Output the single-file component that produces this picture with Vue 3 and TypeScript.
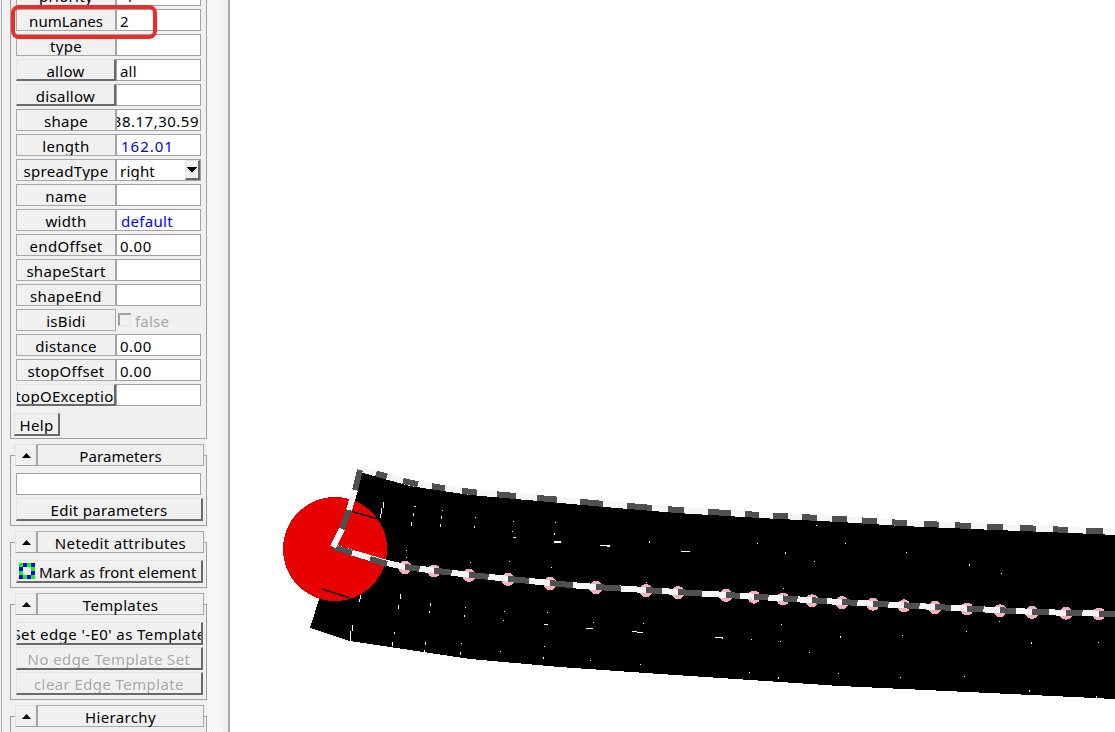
<script setup lang="ts">
type Row = { label: string; value?: string; kind?: string; raised?: boolean; tight?: boolean }

const rows: Row[] = [
  { label: 'priority', value: '-1', kind: 'num' },
  { label: 'numLanes', value: '2', tight: true },
  { label: 'type' },
  { label: 'allow', value: 'all', raised: true },
  { label: 'disallow', raised: true },
  { label: 'shape', value: '38.17,30.59', kind: 'clip num' },
  { label: 'length', value: '162.01', kind: 'blue digits' },
  { label: 'spreadType', value: 'right', kind: 'select' },
  { label: 'name' },
  { label: 'width', value: 'default', kind: 'blue' },
  { label: 'endOffset', value: '0.00', kind: 'num' },
  { label: 'shapeStart' },
  { label: 'shapeEnd' },
  { label: 'isBidi', value: 'false', kind: 'check' },
  { label: 'distance', value: '0.00', kind: 'num' },
  { label: 'stopOffset', value: '0.00', kind: 'num' },
  { label: 'stopOException', raised: true },
]

const topLine: number[][] = [[360, 469], [410, 483], [470, 492], [550, 499], [593, 503], [677, 510], [760, 515], [840, 519], [902, 523], [995, 527], [1095, 531], [1115, 532]]
const midLine: number[][] = [[333, 547], [387, 563], [405, 567], [470, 575], [570, 585], [596, 587], [677, 592], [760, 597], [840, 602], [935, 607], [1035, 612], [1115, 614]]
const botLine: number[][] = [[310, 628], [350, 641], [470, 659], [560, 667], [660, 674], [840, 686], [968, 692], [1115, 699]]

const toPts = (p: number[][]) => p.map((q) => q.join(',')).join(' ')
const roadPoints = toPts([...topLine, ...[...botLine].reverse()])
const midPoints = toPts(midLine)
const topPoints = toPts(topLine)

const yAt = (line: number[][], x: number): number => {
  for (let i = 1; i < line.length; i++) {
    const [x0, y0] = line[i - 1]
    const [x1, y1] = line[i]
    if (x <= x1) return y0 + ((y1 - y0) * (x - x0)) / (x1 - x0)
  }
  return line[line.length - 1][1]
}

const topDashes: number[][] = [[376, 387], [403, 418], [432, 445], [462, 477], [497, 516], [537, 557], [580, 603], [627, 652], [668, 684], [708, 731], [745, 759], [773, 788], [802, 817], [832, 847], [862, 877], [892, 907], [924, 939], [955, 971], [987, 1003], [1020, 1036], [1053, 1068], [1086, 1103]]
const topDark = topDashes.map(([a, b]) => ({ x1: a, y1: yAt(topLine, a), x2: b, y2: yAt(topLine, b) }))

const dots: number[] = [405, 434, 469, 508, 550, 596, 646, 678, 726, 754, 783, 812, 842, 873, 904, 935, 967, 1000, 1032, 1066, 1099]
const pink = dots.map((x) => ({ x, y: yAt(midLine, x) + 0.5 }))

const midDark = dots.map((x, i) => {
  const next = dots[i + 1] ?? 1133
  const end = x + (next - x) * 0.5
  return { x1: x, y1: yAt(midLine, x), x2: end, y2: yAt(midLine, end) }
})

const specks: number[][] = [
  [414, 506, 2, 1], [413, 513, 1, 3], [411, 522, 1, 4], [442, 510, 1, 1], [441, 516, 1, 3], [440, 524, 1, 3],
  [475, 517, 1, 1], [474, 526, 1, 2], [513, 521, 1, 1], [512, 531, 1, 1], [513, 537, 3, 1], [555, 522, 1, 1], [554, 533, 1, 2], [554, 541, 7, 2],
  [400, 594, 1, 5], [398, 605, 1, 4], [430, 603, 1, 3], [429, 611, 1, 2], [465, 607, 1, 1], [464, 615, 1, 2], [504, 611, 1, 1], [503, 620, 1, 1], [547, 612, 1, 1], [544, 624, 4, 1],
  [394, 632, 1, 2], [392, 642, 1, 4], [425, 642, 1, 3], [424, 650, 1, 3], [461, 643, 1, 1], [460, 652, 1, 3], [500, 651, 1, 1], [544, 646, 1, 1], [543, 657, 1, 2],
  [406, 550, 1, 1], [406, 557, 1, 1], [470, 562, 1, 1], [509, 561, 1, 1], [551, 567, 1, 1],
  [560, 541, 1, 2], [600, 545, 10, 1], [607, 546, 3, 1], [649, 541, 1, 2], [681, 551, 9, 1], [757, 543, 1, 1], [785, 552, 1, 2], [814, 561, 1, 1], [816, 525, 1, 1],
  [646, 582, 1, 1], [783, 588, 1, 1], [593, 622, 1, 1], [586, 628, 7, 1], [643, 623, 1, 1], [632, 631, 5, 1], [637, 632, 6, 1], [715, 637, 8, 1], [722, 638, 1, 1], [751, 639, 1, 1], [780, 641, 1, 1], [781, 624, 1, 1], [809, 652, 1, 1],
  [590, 660, 1, 1], [640, 664, 1, 1], [749, 672, 1, 1], [778, 677, 1, 2], [838, 673, 1, 1],
  [845, 543, 1, 1], [906, 552, 1, 1], [969, 564, 1, 2], [1001, 573, 1, 1], [840, 636, 1, 2], [902, 635, 1, 1], [966, 631, 1, 1], [1031, 642, 1, 2], [1098, 642, 1, 1], [999, 621, 1, 1],
  [900, 677, 1, 1], [964, 676, 1, 1], [1029, 690, 1, 2], [1096, 696, 1, 2],
  [383, 502, 1, 6], [381, 508, 1, 6], [380, 514, 1, 4], [360, 595, 1, 4], [359, 599, 1, 3], [352, 625, 1, 6], [350, 631, 1, 10],
]

const iconCells: { x: number; y: number; c: string }[] = []
for (let r = 0; r < 4; r++) {
  for (let c = 0; c < 4; c++) {
    if (r > 0 && r < 3 && c > 0 && c < 3) continue
    iconCells.push({ x: c, y: r, c: (r + c) % 2 === 0 ? '#00ff00' : '#0000ff' })
  }
}
</script>

<template>
  <div class="root">
    <aside class="panel">
      <div class="col">
        <section class="attrs">
          <div v-for="row in rows" :key="row.label" class="row">
            <div class="btn" :class="{ raised: row.raised, tight: row.tight }"><span>{{ row.label }}</span></div>
            <div v-if="row.kind === 'check'" class="check-cell">
              <span class="checkbox"></span><span class="check-label">{{ row.value }}</span>
            </div>
            <div v-else class="field" :class="row.kind">
              <span class="value">{{ row.value }}</span>
              <span v-if="row.kind === 'select'" class="arrow">
                <svg width="10" height="6" viewBox="0 0 10 6" shape-rendering="crispEdges"><path d="M0 0H10L5 6Z" fill="#000" /></svg>
              </span>
            </div>
          </div>
          <div class="btn raised help"><span>Help</span></div>
        </section>

        <section class="group">
          <header class="ghead">
            <div class="collapse"><svg width="9" height="5" viewBox="0 0 9 5"><path d="M0 5H9L4.500 0Z" fill="#000" /></svg></div>
            <div class="gtitle tight">Parameters</div>
          </header>
          <div class="field wide"></div>
          <div class="btn raised full"><span>Edit parameters</span></div>
        </section>

        <section class="group">
          <header class="ghead">
            <div class="collapse"><svg width="9" height="5" viewBox="0 0 9 5"><path d="M0 5H9L4.500 0Z" fill="#000" /></svg></div>
            <div class="gtitle">Netedit attributes</div>
          </header>
          <div class="btn raised full mark">
            <svg class="mark-icon" width="16" height="16" viewBox="0 0 4 4" shape-rendering="crispEdges">
              <rect v-for="(c, i) in iconCells" :key="i" :x="c.x" :y="c.y" width="1" height="1" :fill="c.c" />
            </svg>
            <span>Mark as front element</span>
          </div>
        </section>

        <section class="group">
          <header class="ghead">
            <div class="collapse"><svg width="9" height="5" viewBox="0 0 9 5"><path d="M0 5H9L4.500 0Z" fill="#000" /></svg></div>
            <div class="gtitle">Templates</div>
          </header>
          <div class="stack">
            <div class="btn raised full loose"><span>Set edge '-E0' as Template</span></div>
            <div class="btn raised full disabled"><span>No edge Template Set</span></div>
            <div class="btn raised full disabled"><span>clear Edge Template</span></div>
          </div>
        </section>

        <section class="group">
          <header class="ghead">
            <div class="collapse"><svg width="9" height="5" viewBox="0 0 9 5"><path d="M0 5H9L4.500 0Z" fill="#000" /></svg></div>
            <div class="gtitle">Hierarchy</div>
          </header>
          <div class="field wide"></div>
        </section>
      </div>
      <div class="dither"></div>
      <div class="rail"></div>
    </aside>

    <svg class="canvas" viewBox="230 0 885 732" shape-rendering="crispEdges">
      <polygon :points="roadPoints" fill="#000" />
      <circle cx="335" cy="549" r="52" fill="#e60000" />
      <line x1="350" y1="511" x2="378" y2="519" stroke="#000" stroke-width="1.500" />
      <line x1="322" y1="589" x2="350" y2="598" stroke="#000" stroke-width="1.500" />
      <rect v-for="(s, i) in specks" :key="i" :x="s[0]" :y="s[1]" :width="s[2]" :height="s[3]" fill="#fff" />
      <circle v-for="d in pink" :key="d.x" :cx="d.x" :cy="d.y" r="6.500" fill="#f7b0bc" />

      <polyline :points="topPoints" fill="none" stroke="#f5f5f5" stroke-width="6" />
      <line v-for="d in topDark" :key="d.x1" :x1="d.x1" :y1="d.y1" :x2="d.x2" :y2="d.y2" stroke="#505050" stroke-width="6" />

      <polyline :points="midPoints" fill="none" stroke="#f5f5f5" stroke-width="6" />
      <line x1="333" y1="547" x2="352" y2="553" stroke="#505050" stroke-width="6" />
      <line x1="370" y1="559" x2="387" y2="564" stroke="#505050" stroke-width="6" />
      <line v-for="d in midDark" :key="d.x1" :x1="d.x1" :y1="d.y1" :x2="d.x2" :y2="d.y2" stroke="#505050" stroke-width="6" />

      <line x1="333" y1="547" x2="342" y2="529" stroke="#f5f5f5" stroke-width="6" />
      <line x1="342" y1="529" x2="349" y2="510" stroke="#505050" stroke-width="6" />
      <line x1="349" y1="510" x2="355" y2="490" stroke="#f5f5f5" stroke-width="6" />
      <line x1="355" y1="490" x2="360" y2="470" stroke="#505050" stroke-width="6" />
    </svg>

    <div class="callout"></div>
  </div>
</template>

<style scoped>
.root {
  position: relative;
  display: flex;
  width: 1115px;
  height: 732px;
  overflow: hidden;
  padding-left: 1px;
  box-sizing: border-box;
  background: #f0f0f0;
  font-family: "Noto Sans", "Open Sans", sans-serif;
  font-size: 15px;
  color: #000;
}
.panel {
  flex: none;
  display: flex;
  box-sizing: border-box;
  width: 229px;
  height: 732px;
  overflow: hidden;
  padding-left: 8px;
  background: #f0f0f0;
  border-left: 1px solid #a8a8a8;
  border-right: 2px solid #a8a8a8;
}
.col {
  flex: none;
  width: 197px;
  background: #f0f0f0;
}
.dither {
  flex: none;
  width: 16px;
  background: repeating-conic-gradient(#ffffff 0 25%, #f0f0f0 0 50%) 0 0 / 2px 2px;
}
.rail {
  flex: 1;
}
.canvas {
  flex: 1;
  display: block;
  height: 732px;
  background: #fff;
}
.attrs {
  box-sizing: border-box;
  display: flex;
  flex-direction: column;
  gap: 3px;
  margin-top: -16px;
  height: 455px;
  padding: 0 4px 0 5px;
  border: 1px solid #a0a0a0;
  border-top: 0;
}
.row {
  display: grid;
  grid-template-columns: 100px 85px;
  height: 22px;
}
.btn {
  box-sizing: border-box;
  display: flex;
  align-items: center;
  justify-content: center;
  height: 22px;
  padding-top: 2px;
  overflow: hidden;
  white-space: nowrap;
  letter-spacing: 0.3px;
  background: #f0f0f0;
  border: 1px solid #a8a8a8;
  line-height: 20px;
}
.btn.tight {
  letter-spacing: 0;
}
.btn > span {
  flex: none;
}
.btn.raised {
  border-color: #e4e4e4 #6a6a6a #6a6a6a #e4e4e4;
  border-width: 1px 2px 2px 1px;
}
.field {
  box-sizing: border-box;
  display: flex;
  align-items: center;
  height: 22px;
  padding-top: 2px;
  overflow: hidden;
  white-space: nowrap;
  padding-left: 3px;
  letter-spacing: 0.2px;
  background: #fff;
  border: 1px solid #a0a0a0;
  line-height: 20px;
}
.field.num {
  letter-spacing: 0.5px;
}
.field.blue {
  letter-spacing: 0.3px;
}
.field.blue .value {
  color: #0000ff;
  padding-left: 1px;
}
.field.digits {
  letter-spacing: 1px;
}
.field.clip {
  justify-content: flex-end;
  padding: 2px 1px 0 0;
}
.field.clip .value {
  flex: none;
}
.field.select {
  justify-content: space-between;
  padding: 0 0 0 3px;
}
.field.select .value {
  padding-top: 2px;
}
.arrow {
  box-sizing: border-box;
  display: flex;
  align-items: center;
  justify-content: center;
  width: 15px;
  height: 20px;
  background: #f0f0f0;
  border: 1px solid;
  border-width: 1px 2px 2px 1px;
  border-color: #e4e4e4 #6a6a6a #6a6a6a #e4e4e4;
}
.check-cell {
  display: flex;
  align-items: center;
  gap: 4px;
  padding: 2px 0 0 2px;
  letter-spacing: 0.2px;
  color: #a6a6a6;
}
.checkbox {
  box-sizing: border-box;
  width: 13px;
  height: 13px;
  background: #f0f0f0;
  border: 1px solid;
  border-width: 2px 1px 1px 2px;
  border-color: #a0a0a0 #e4e4e4 #e4e4e4 #a0a0a0;
  margin-top: -4px;
}
.help {
  width: 46px;
  height: 23px;
  margin: 4px 0 0 -2px;
}
.group {
  box-sizing: border-box;
  margin-top: 16px;
  padding: 0 2px 4px 5px;
  border: 1px solid #a0a0a0;
}
.ghead {
  display: flex;
  height: 22px;
  margin: -12px 0 7px -1px;
  background: #f0f0f0;
}
.collapse {
  box-sizing: border-box;
  flex: none;
  display: flex;
  align-items: center;
  justify-content: center;
  width: 22px;
  height: 22px;
  border: 1px solid;
  border-color: #e4e4e4 #a0a0a0 #a0a0a0 #e4e4e4;
}
.gtitle {
  box-sizing: border-box;
  flex: 1;
  height: 22px;
  line-height: 22px;
  text-align: center;
  letter-spacing: 0.35px;
  border: 1px solid #a8a8a8;
}
.gtitle.tight {
  letter-spacing: 0.1px;
}
.field.wide {
  width: 185px;
  height: 22px;
  margin-bottom: 3px;
}
.btn.full {
  width: 187px;
  height: 23px;
}
.btn.loose {
  letter-spacing: 0.42px;
}
.stack {
  display: flex;
  flex-direction: column;
  gap: 2px;
}
.mark {
  gap: 4px;
  justify-content: flex-start;
  padding-left: 2px;
  letter-spacing: 0.05px;
}
.mark-icon {
  flex: none;
  margin-top: -2px;
}
.disabled {
  letter-spacing: 0.4px;
  color: #a6a6a6;
  text-shadow: 1px 1px 0 #fff;
}
.callout {
  position: absolute;
  left: 11px;
  top: 5px;
  box-sizing: border-box;
  width: 146px;
  height: 34px;
  border: 4px solid #ee2b24;
  border-radius: 8px;
  pointer-events: none;
}
</style>
